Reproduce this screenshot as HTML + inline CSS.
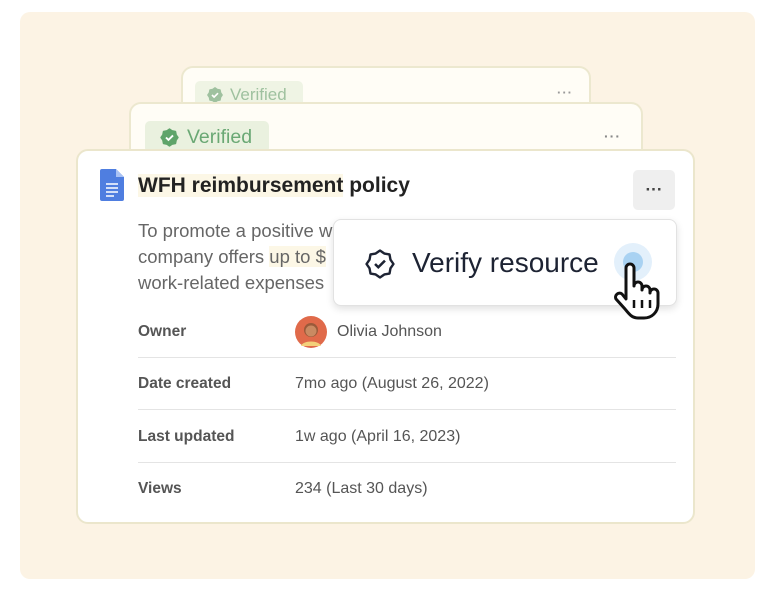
<!DOCTYPE html>
<html><head><style>
*{margin:0;padding:0;box-sizing:border-box}
body{width:768px;height:594px;background:#fff;font-family:"Liberation Sans",sans-serif;position:relative;overflow:hidden}
.panel{position:absolute;left:20px;top:12px;width:735px;height:567px;background:#fcf3e4;border-radius:10px}
.card{position:absolute;background:#fffdf6;border:2px solid #ece8cf;border-radius:12px}
.badge{position:absolute;background:#eaf1df;border-radius:5px;color:#7fae82;display:flex;align-items:center}
.dots{position:absolute;color:#999;letter-spacing:1px;font-weight:bold}
.t{position:absolute;font-size:15.5px;color:#555;line-height:18px}
.lbl{left:138px;font-weight:bold}
.val{left:295px}
.ln{position:absolute;left:138px;width:538px;height:1px;background:#e4e4e4}
</style></head><body>
<div class="panel"></div>
<div class="card" style="left:181px;top:66px;width:410px;height:60px">
 <div class="badge" style="left:12px;top:13px;width:108px;height:27px;font-size:17px;padding-left:11px;opacity:.75">
  <svg width="18" height="18" viewBox="0 0 24 24"><path d="M21.5 12L19.39 15.06 18.72 18.72 15.06 19.39 12 21.5 8.94 19.39 5.28 18.72 4.61 15.06 2.5 12 4.61 8.94 5.28 5.28 8.94 4.61 12 2.5 15.06 4.61 18.72 5.28 19.39 8.94Z" fill="#7fae82" stroke="#7fae82" stroke-width="2" stroke-linejoin="round"/><path d="M8 12l2.8 2.8 5.2-5.2" stroke="#fff" stroke-width="2.2" fill="none"/></svg>
  <span style="margin-left:6px">Verified</span></div>
 <div class="dots" style="right:16px;top:17px;font-size:13px">···</div>
</div>
<div class="card" style="left:129px;top:102px;width:514px;height:70px">
 <div class="badge" style="left:14px;top:17px;width:124px;height:32px;font-size:19.5px;padding-left:14px">
  <svg width="21" height="21" viewBox="0 0 24 24"><path d="M21.5 12L19.39 15.06 18.72 18.72 15.06 19.39 12 21.5 8.94 19.39 5.28 18.72 4.61 15.06 2.5 12 4.61 8.94 5.28 5.28 8.94 4.61 12 2.5 15.06 4.61 18.72 5.28 19.39 8.94Z" fill="#5fa46a" stroke="#5fa46a" stroke-width="2" stroke-linejoin="round"/><path d="M8 12l2.8 2.8 5.2-5.2" stroke="#fff" stroke-width="2.2" fill="none"/></svg>
  <span style="margin-left:7px;color:#6aa874">Verified</span></div>
 <div class="dots" style="right:20px;top:24px;font-size:14px;color:#888">···</div>
</div>
<div class="card" style="left:76px;top:149px;width:619px;height:375px;background:#fff;border-color:#ebe6cc">
 <svg style="position:absolute;left:22px;top:18px" width="24" height="32" viewBox="0 0 24 32"><path d="M2 0h14l8 8v22a2 2 0 0 1-2 2H2a2 2 0 0 1-2-2V2a2 2 0 0 1 2-2z" fill="#4f7ee0"/><path d="M16 0v8h8z" fill="#a9c2f4"/><path d="M6 15h12M6 19h12M6 23h12M6 27h8" stroke="#fff" stroke-width="1.6"/></svg>
 <div style="position:absolute;left:60px;top:23px;font-size:21px;font-weight:bold;color:#222"><span style="background:#fcf7e6">WFH reimbursement</span> policy</div>
 <div style="position:absolute;right:18px;top:19px;width:42px;height:40px;background:#efefef;border-radius:5px;text-align:center;line-height:40px;font-weight:bold;color:#444;font-size:17px">···</div>
 <div style="position:absolute;left:60px;top:67px;font-size:18.5px;line-height:26px;color:#666;white-space:nowrap">To promote a positive w<br>company offers <span style="background:#fcf7e6">up to $</span><br>work-related expenses</div>
</div>
<div class="t lbl" style="top:323px">Owner</div>
<svg style="position:absolute;left:295px;top:316px" width="32" height="32" viewBox="0 0 32 32"><circle cx="16" cy="16" r="16" fill="#e06a4a"/><circle cx="16" cy="14" r="7" fill="#9a5a3a"/><circle cx="16" cy="15" r="5.5" fill="#c98a62"/><path d="M6 30c2-6 18-6 20 0" fill="#f3d07a"/></svg>
<div class="t" style="left:337px;top:323px;font-size:16px">Olivia Johnson</div>
<div class="ln" style="top:357px"></div>
<div class="t lbl" style="top:375px">Date created</div><div class="t val" style="top:375px;font-size:16px">7mo ago (August 26, 2022)</div>
<div class="ln" style="top:409px"></div>
<div class="t lbl" style="top:428px">Last updated</div><div class="t val" style="top:428px;font-size:16px">1w ago (April 16, 2023)</div>
<div class="ln" style="top:462px"></div>
<div class="t lbl" style="top:480px">Views</div><div class="t val" style="top:480px;font-size:16px">234 (Last 30 days)</div>
<div style="position:absolute;left:333px;top:219px;width:344px;height:87px;background:#fff;border:1.5px solid #e2e2e2;border-radius:8px;box-shadow:0 3px 8px rgba(0,0,0,.12)">
 <svg style="position:absolute;left:29px;top:27px" width="34" height="34" viewBox="0 0 24 24"><path d="M21.5 12L19.39 15.06 18.72 18.72 15.06 19.39 12 21.5 8.94 19.39 5.28 18.72 4.61 15.06 2.5 12 4.61 8.94 5.28 5.28 8.94 4.61 12 2.5 15.06 4.61 18.72 5.28 19.39 8.94Z" fill="none" stroke="#1d2333" stroke-width="1.7" stroke-linejoin="round"/><path d="M8.5 12l2.3 2.3 4.7-4.7" stroke="#1d2333" stroke-width="1.8" fill="none"/></svg>
 <div style="position:absolute;left:78px;top:27px;font-size:28px;color:#1d2333">Verify resource</div>
 <div style="position:absolute;left:280px;top:23px;width:38px;height:38px;border-radius:50%;background:#e3f0fb"></div>
 <div style="position:absolute;left:289px;top:32px;width:20px;height:20px;border-radius:50%;background:#a9d2f2"></div>
</div>
<svg style="position:absolute;left:612px;top:262px" width="52" height="58" viewBox="0 0 52 58"><path d="M14 6a4 4 0 0 1 8 0v18a4 4 0 0 1 8 0v4a4 4 0 0 1 8 0v3a4 4 0 0 1 8 0v11c0 8-6 14-14 14h-6c-6 0-9-4-13-9L4 37a4 4 0 0 1 6-5l4 5z" fill="#fff" stroke="#111" stroke-width="3" stroke-linejoin="round"/><path d="M22 38v8M30 38v8M38 38v8" stroke="#111" stroke-width="2.5"/></svg>
</body></html>
